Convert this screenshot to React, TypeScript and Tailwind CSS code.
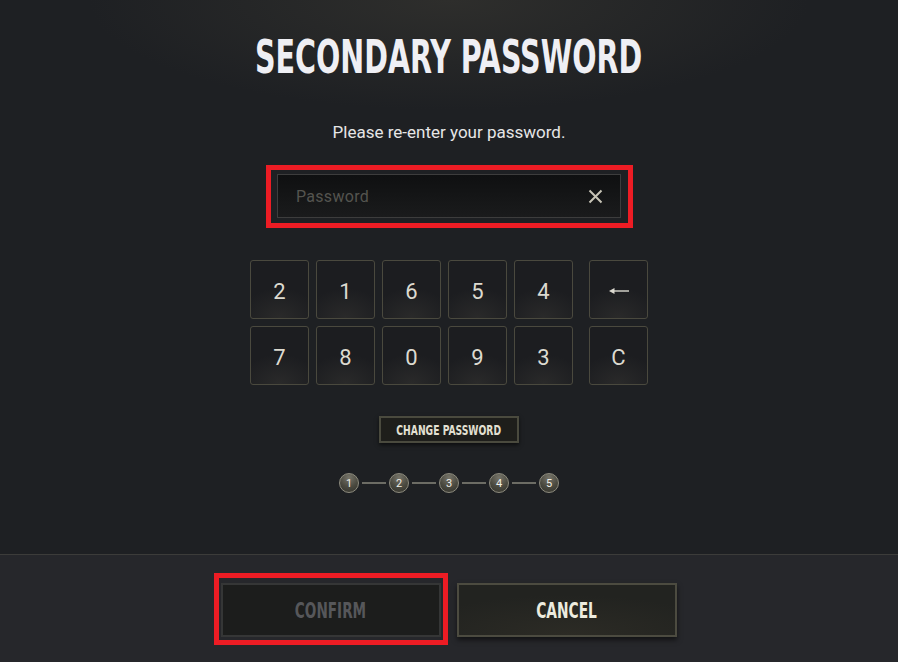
import React from "react";

const condensed = { fontFamily: '"Liberation Sans Narrow", "DejaVu Sans Condensed", "Liberation Sans", sans-serif' };
const roboto = { fontFamily: 'Roboto, "Liberation Sans", sans-serif' };

function Key({ children }: { children: React.ReactNode }) {
  return (
    <div
      className="w-[59px] h-[59px] rounded-[3px] border border-[#4a493e] bg-[radial-gradient(ellipse_40px_30px_at_50%_100%,#2a2a2a_0%,#1c1d20_100%)] flex items-center justify-center pt-[3px] text-[22px] text-[#dcdad0]"
      style={roboto}
    >
      {children}
    </div>
  );
}

function Step({ n }: { n: number }) {
  return (
    <div
      className="w-[20px] h-[20px] rounded-full border border-[#8e8c7e] bg-[radial-gradient(circle_at_50%_20%,#77756a_0%,#4a493f_55%,#33332d_100%)] flex items-center justify-center text-[11px] text-[#f0efe8] leading-none"
      style={roboto}
    >
      {n}
    </div>
  );
}

export default function App() {
  const row1 = ["2", "1", "6", "5", "4"];
  const row2 = ["7", "8", "0", "9", "3"];
  return (
    <div className="w-[898px] h-[662px] flex flex-col overflow-hidden bg-[#1e2023]">
      <div className="h-[554px] flex flex-col items-center bg-[radial-gradient(ellipse_360px_110px_at_50%_0%,#2e2e2c_0%,#1e2023_100%)]">
        <div className="mt-[34px] h-[46px] leading-[46px] text-[46px] font-bold text-[#efeff4] whitespace-nowrap scale-x-[0.69]" style={condensed}>
          SECONDARY PASSWORD
        </div>
        <div className="mt-[42px] h-[20px] leading-[20px] text-[17px] text-[#e6e6e6]" style={roboto}>
          Please re-enter your password.
        </div>
        <div className="relative mt-[32px]">
          <div className="w-[344px] h-[44px] border border-[#3d3d3d] bg-[linear-gradient(180deg,#0f1011_0%,#1a1b1c_100%)] flex items-center justify-between pl-[18px] pr-[17px]">
            <span className="pt-[2px] text-[16px] text-[#54544f] tracking-[0.3px]" style={roboto}>Password</span>
            <svg width="15" height="15" viewBox="0 0 15 15">
              <path d="M1.5 1.5 L13.5 13.5 M13.5 1.5 L1.5 13.5" stroke="#c7c4b6" strokeWidth="2" />
            </svg>
          </div>
          <div className="absolute -left-[11px] -right-[12px] -top-[9px] -bottom-[10px] border-[5px] border-[#ed1c24] pointer-events-none" />
        </div>
        <div className="mt-[42px] flex gap-[16px]">
          <div className="grid grid-cols-5 gap-[7px]">
            {row1.map((d) => <Key key={d}>{d}</Key>)}
            {row2.map((d) => <Key key={d}>{d}</Key>)}
          </div>
          <div className="grid grid-cols-1 gap-[7px]">
            <Key>
              <svg width="22" height="10" viewBox="0 0 22 10">
                <path d="M3 5 H21" stroke="#dcdad0" strokeWidth="1.4" />
                <path d="M1 5 L6.5 2 L6.5 8 Z" fill="#dcdad0" />
              </svg>
            </Key>
            <Key>C</Key>
          </div>
        </div>
        <div className="mt-[31px] w-[140px] h-[27px] border-2 border-[#4a4a3e] bg-[#1e1e1b] shadow-[0_2px_4px_rgba(0,0,0,0.6)] flex items-center justify-center pt-[2px]">
          <span className="text-[14px] font-bold text-[#e3e0d2] whitespace-nowrap scale-x-[0.73]" style={condensed}>CHANGE PASSWORD</span>
        </div>
        <div className="mt-[30px] flex items-center">
          {[1, 2, 3, 4, 5].map((n, i) => (
            <React.Fragment key={n}>
              {i > 0 && <div className="w-[24px] h-[2px] mx-[3px] bg-[#6c6c64]" />}
              <Step n={n} />
            </React.Fragment>
          ))}
        </div>
      </div>
      <div className="h-px bg-[#3c3c3a]" />
      <div className="flex-1 bg-[#26272b] flex justify-center pt-[28px] gap-[16px]">
        <div className="relative h-[54px]">
          <div className="w-[220px] h-[54px] border-2 border-[#353636] bg-[#1c1d1c] flex items-center justify-center pt-[3px]">
            <span className="text-[21px] font-bold text-[#56575a] scale-x-[0.72]" style={condensed}>CONFIRM</span>
          </div>
          <div className="absolute -left-[7px] -right-[7px] -top-[10px] -bottom-[8px] border-[5px] border-[#ed1c24] pointer-events-none" />
        </div>
        <div className="w-[220px] h-[54px] border-2 border-[#4c4b40] bg-[radial-gradient(ellipse_160px_40px_at_50%_100%,#2c2b25_0%,#222320_100%)] shadow-[0_3px_5px_rgba(0,0,0,0.55)] flex items-center justify-center pt-[3px]">
          <span className="text-[21px] font-bold text-[#ecebdf] scale-x-[0.73]" style={condensed}>CANCEL</span>
        </div>
      </div>
    </div>
  );
}
